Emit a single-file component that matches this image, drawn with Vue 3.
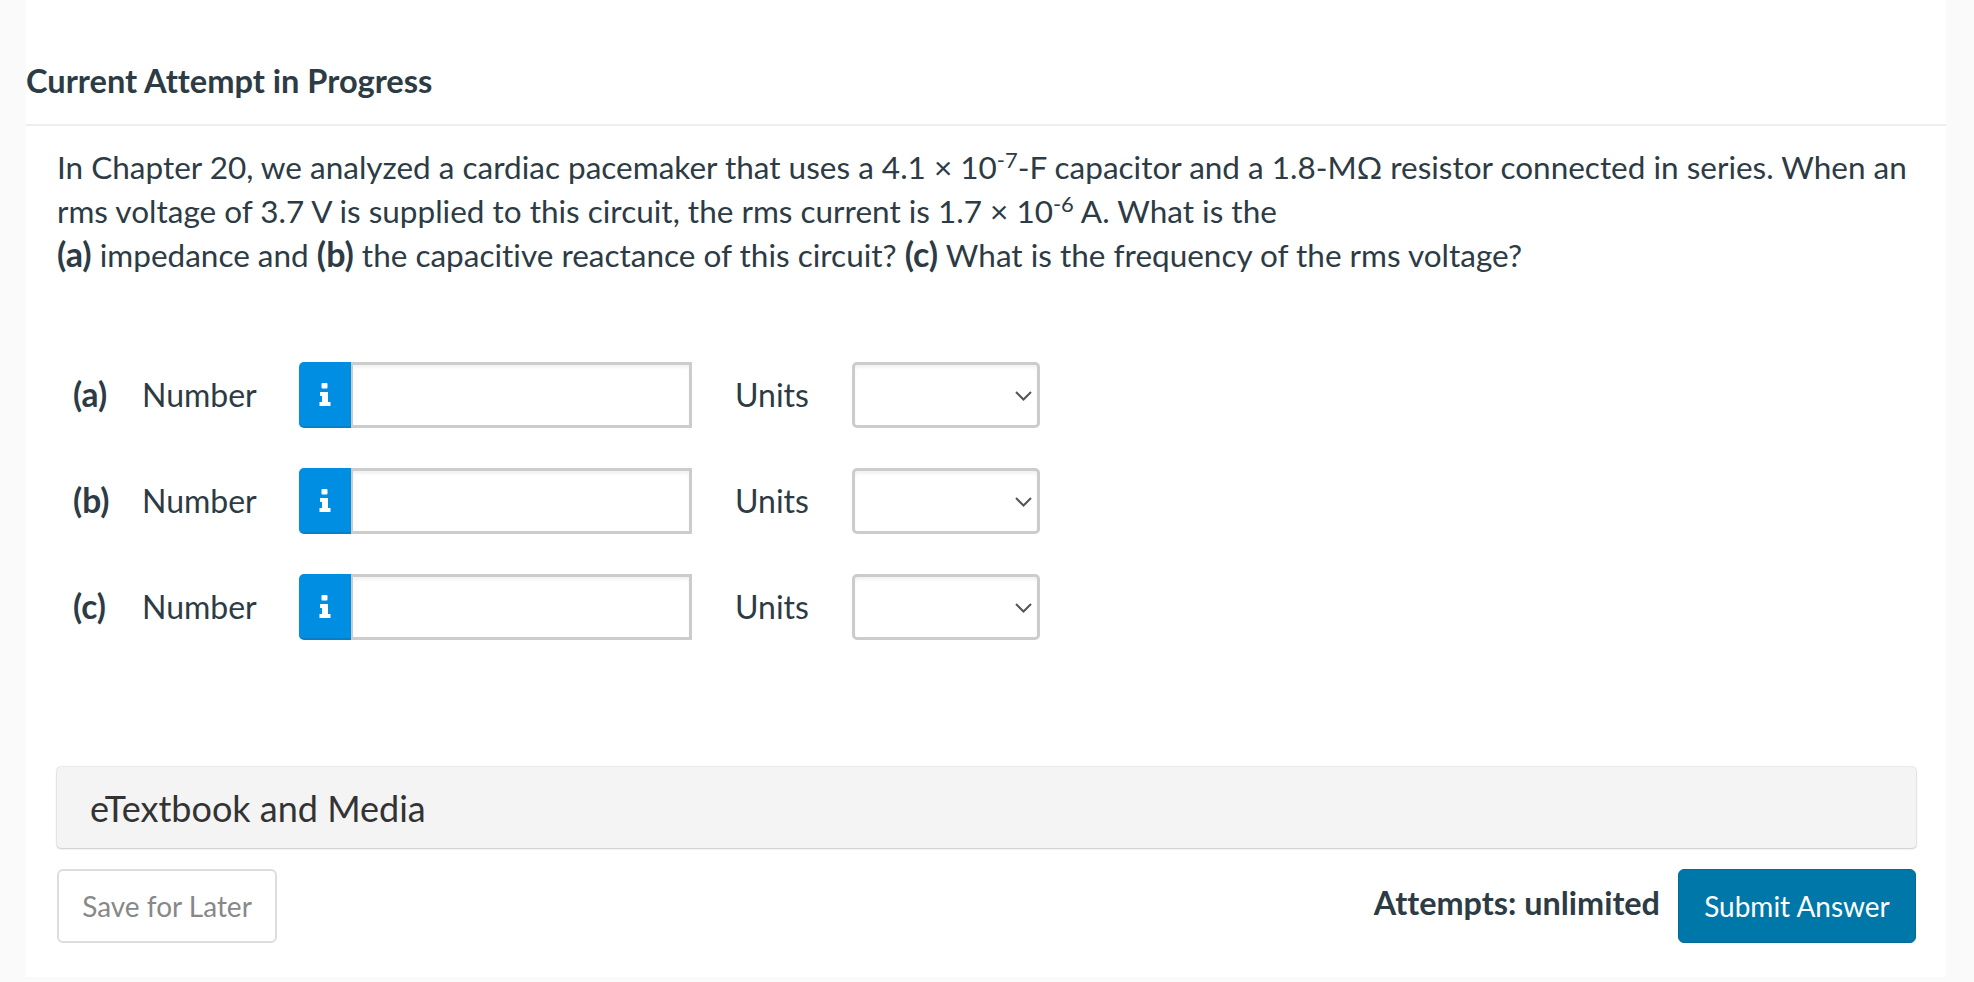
<template>
  <div class="page">
    <main class="card">
      <h2 class="card-title">Current Attempt in Progress</h2>
      <div class="card-body">
        <p class="question">
          In Chapter 20, we analyzed a cardiac pacemaker that uses a 4.1 × 10<sup>-7</sup>-F capacitor and a 1.8-MΩ resistor connected in series. When an rms voltage of 3.7 V is supplied to this circuit, the rms current is 1.7 × 10<sup>-6</sup> A. What is the<br />
          <b>(a)</b> impedance and <b>(b)</b> the capacitive reactance of this circuit? <b>(c)</b> What is the frequency of the rms voltage?
        </p>

        <div class="answers">
          <div class="answer-row" v-for="part in parts" :key="part">
            <b class="part">({{ part }})</b>
            <label class="field-label">Number</label>
            <button class="info-btn" type="button" aria-label="info">
              <svg width="12" height="23" viewBox="0 0 12 23">
                <path fill="#fff" d="M2.500 1a1 1 0 0 1 1-1h4a1 1 0 0 1 1 1v3.500a1 1 0 0 1-1 1h-4a1 1 0 0 1-1-1zM1 9h8v10h2.500v4H.5v-4H3v-6H1z" />
              </svg>
            </button>
            <input class="number-input" type="text" />
            <label class="units-label">Units</label>
            <div class="select-wrap">
              <select class="units-select"></select>
              <svg class="chevron" width="17" height="10" viewBox="0 0 17 10">
                <path d="M1 1l7.500 7.500L16 1" fill="none" stroke="#555" stroke-width="2" />
              </svg>
            </div>
          </div>
        </div>

        <div class="media-bar">eTextbook and Media</div>

        <div class="actions">
          <button class="save-btn" type="button">Save for Later</button>
          <div class="submit-group">
            <span class="attempts">Attempts: unlimited</span>
            <button class="submit-btn" type="button">Submit Answer</button>
          </div>
        </div>
      </div>
    </main>
  </div>
</template>

<script setup>
const parts = ['a', 'b', 'c']
</script>

<style>
html,
body {
  background: #fafafa;
}
</style>

<style scoped>
.page {
  height: 982px;
  padding: 0 28px 5px 26px;
  box-sizing: border-box;
  font-family: Lato, "Liberation Sans", sans-serif;
  font-variant-ligatures: none;
  color: #2d3b45;
  overflow: hidden;
}

.card {
  height: 100%;
  background: #fff;
}

.card-title {
  margin: 0;
  height: 126px;
  padding-top: 61px;
  box-sizing: border-box;
  font-size: 32.6px;
  line-height: 40px;
  font-weight: 700;
  border-bottom: 2px solid #eee;
}

.card-body {
  padding: 0 30px 0 31px;
}

.question {
  margin: 0;
  padding-top: 19px;
  font-size: 31.5px;
  line-height: 44px;
  height: 190px;
  box-sizing: border-box;
}

.question sup {
  font-size: 22px;
  line-height: 0;
}

.question b {
  font-size: 34px;
  line-height: 0;
  font-weight: 700;
}

.answers {
  margin-top: 46px;
  display: flex;
  flex-direction: column;
  gap: 40px;
}

.answer-row {
  display: flex;
  align-items: center;
  height: 66px;
  font-size: 32px;
  padding-left: 16px;
}

.part {
  width: 69px;
  margin-bottom: 2px;
  font-size: 33.5px;
  font-weight: 700;
}

.field-label {
  width: 157px;
  margin-bottom: 2px;
}

.info-btn {
  width: 52px;
  height: 66px;
  padding: 0;
  display: flex;
  align-items: center;
  justify-content: center;
  background: #008ee2;
  border: 0;
  border-bottom: 2px solid #0480c8;
  border-radius: 5px 0 0 5px;
}

.number-input {
  width: 341px;
  height: 66px;
  box-sizing: border-box;
  border: 3px solid #ccc;
  border-left-width: 2px;
  background: #fff;
  box-shadow: inset 0 3px 3px rgba(0, 0, 0, 0.05);
}

.units-label {
  margin-left: 43px;
  margin-bottom: 2px;
  width: 117px;
}

.select-wrap {
  position: relative;
  width: 188px;
  height: 66px;
}

.units-select {
  appearance: none;
  width: 100%;
  height: 100%;
  border: 3px solid #ccc;
  border-radius: 5px;
  background: #fff;
  box-shadow: inset 0 3px 3px rgba(0, 0, 0, 0.05);
}

.chevron {
  position: absolute;
  right: 8px;
  top: 29px;
  pointer-events: none;
}

.media-bar {
  margin-top: 127px;
  height: 81px;
  box-sizing: border-box;
  padding: 0 33px;
  display: flex;
  align-items: center;
  background: #f4f4f4;
  border-radius: 4px;
  box-shadow: 0 0 2px rgba(0, 0, 0, 0.25), 0 1px 2px rgba(0, 0, 0, 0.15);
  font-size: 36px;
  color: #333;
}

.actions {
  margin-top: 21px;
  display: flex;
  justify-content: space-between;
  align-items: center;
}

.save-btn {
  width: 220px;
  height: 74px;
  background: #fff;
  border: 2px solid #ddd;
  border-radius: 6px;
  font-family: inherit;
  font-size: 28px;
  color: #888;
}

.submit-group {
  display: flex;
  align-items: center;
  gap: 18px;
}

.attempts {
  font-size: 32.4px;
  font-weight: 700;
  position: relative;
  top: -4px;
}

.submit-btn {
  width: 238px;
  height: 74px;
  background: #0077a9;
  border: 1px solid #016a96;
  border-radius: 6px;
  font-family: inherit;
  font-size: 28px;
  color: #fff;
}
</style>
